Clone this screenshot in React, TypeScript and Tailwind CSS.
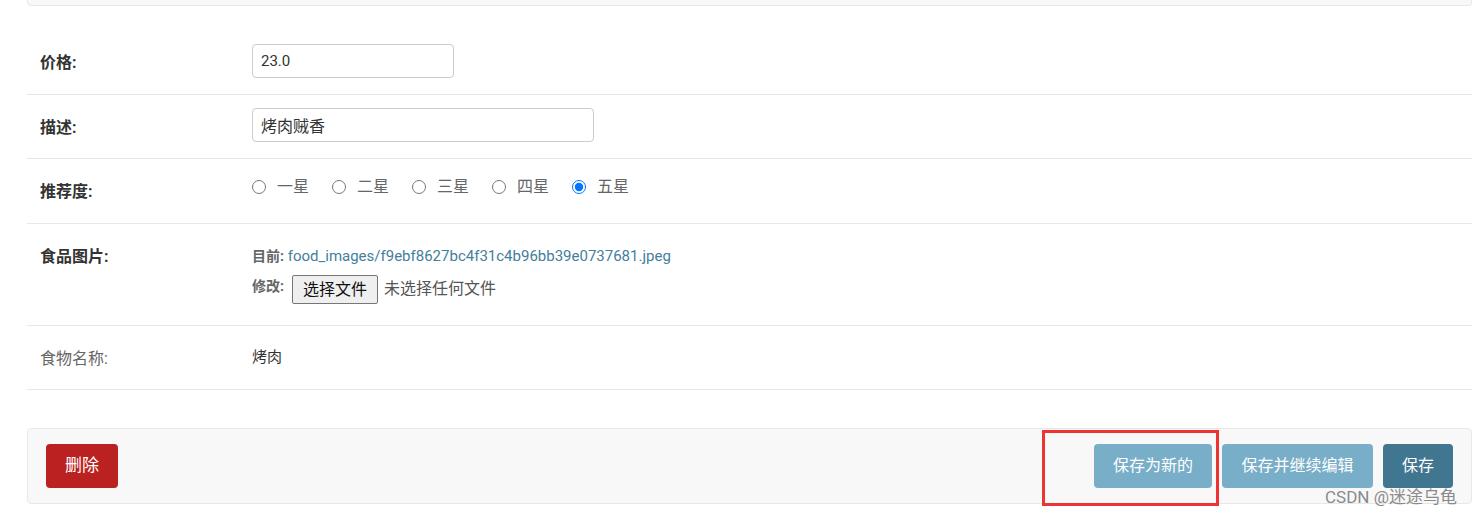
import React from 'react'

const font = { fontFamily: 'Roboto, "Noto Sans CJK SC", sans-serif' }

const Row = ({ label, bold = true, children, h }: { label: string; bold?: boolean; children: React.ReactNode; h: string }) => (
  <div className={`flex border-b border-[#e8e8e8] ${h}`}>
    <div className={`w-[225px] pl-[13px] pt-[23px] text-[16px] leading-[20px] ${bold ? 'font-bold text-[#333]' : 'text-[#666]'}`}>{label}</div>
    <div className="flex-1">{children}</div>
  </div>
)

const stars = ['一星', '二星', '三星', '四星', '五星']

export default function App() {
  return (
    <div className="relative w-[1476px] h-[517px] bg-white overflow-hidden" style={font}>
      <div className="ml-[27px] mr-[4px]">
        <div className="h-[6px] bg-[#f8f8f8] border-x border-b border-[#e8e8e8] rounded-b-[4px]"></div>

        <div className="h-[24px]"></div>

        <Row label="价格:" h="h-[65px]">
          <div className="pt-[14px]">
            <input defaultValue="23.0" className="w-[202px] h-[34px] px-[8px] border border-[#ccc] rounded-[4px] text-[15px] text-[#333] outline-none" />
          </div>
        </Row>

        <Row label="描述:" h="h-[64px]">
          <div className="pt-[13px]">
            <input defaultValue="烤肉贼香" className="w-[342px] h-[34px] px-[8px] border border-[#ccc] rounded-[4px] text-[16px] text-[#333] outline-none" />
          </div>
        </Row>

        <Row label="推荐度:" h="h-[65px]">
          <div className="flex items-center gap-[23px] pt-[18px]">
            {stars.map((s, i) => (
              <label key={i} className="flex items-center gap-[11px] text-[16px] leading-[20px] text-[#666]">
                <input type="radio" name="star" defaultChecked={i === 4} className="m-0 w-[14px] h-[14px] accent-[#0075ff]" />
                {s}
              </label>
            ))}
          </div>
        </Row>

        <Row label="食品图片:" h="h-[102px]">
          <div className="pt-[22px] text-[15px] leading-[20px]">
            <div className="text-[#666]">
              <span className="font-bold text-[14px]">目前:</span>{' '}
              <a className="text-[#447e9b]">food_images/f9ebf8627bc4f31c4b96bb39e0737681.jpeg</a>
            </div>
            <div className="flex items-start mt-[9px]">
              <span className="font-bold text-[14px] text-[#666] mt-[1px]">修改:</span>
              <span className="ml-[8px] h-[29px] w-[86px] justify-center border border-[#767676] bg-[#efefef] rounded-[2px] text-[16px] text-[#111] flex items-center">选择文件</span>
              <span className="ml-[6px] mt-[4px] text-[16px] text-[#555]">未选择任何文件</span>
            </div>
          </div>
        </Row>

        <Row label="食物名称:" bold={false} h="h-[64px]">
          <div className="pt-[21px] text-[15px] leading-[20px] text-[#333]">烤肉</div>
        </Row>

        <div className="h-[38px]"></div>

        <div className="flex items-center justify-between h-[76px] px-[18px] bg-[#f8f8f8] border border-[#e8e8e8] rounded-[4px]">
          <button className="w-[72px] h-[44px] rounded-[4px] bg-[#ba2121] text-white text-[17px]">删除</button>
          <div className="flex gap-[10px]">
            <button className="w-[118px] h-[44px] rounded-[4px] bg-[#79aec8] text-white text-[16px]">保存为新的</button>
            <button className="w-[151px] h-[44px] rounded-[4px] bg-[#79aec8] text-white text-[16px]">保存并继续编辑</button>
            <button className="w-[70px] h-[44px] rounded-[4px] bg-[#417690] text-white text-[16px]">保存</button>
          </div>
        </div>
      </div>

      <div className="absolute left-[1042px] top-[430px] w-[177px] h-[76px] border-[3px] border-[#ee3333]"></div>
      <div className="absolute left-[1325px] top-[486px] text-[17px] leading-[22px] text-[#8a8a8a]">CSDN @迷途乌龟</div>
    </div>
  )
}
